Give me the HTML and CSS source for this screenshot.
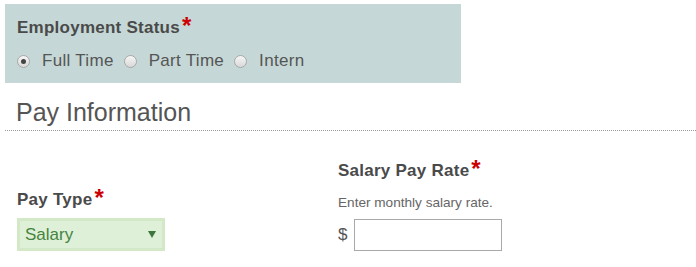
FILE: index.html
```html
<!DOCTYPE html>
<html>
<head>
<meta charset="utf-8">
<link rel="stylesheet" href="styles.css">
</head>
<body>
<div class="status-box">
  <div class="label">Employment Status<span class="req">*</span></div>
  <div class="radios">
    <label class="opt"><input type="radio" name="emp" checked><span>Full Time</span></label>
    <label class="opt"><input type="radio" name="emp"><span>Part Time</span></label>
    <label class="opt"><input type="radio" name="emp"><span>Intern</span></label>
  </div>
</div>
<h2 class="section-title">Pay Information</h2>
<div class="fields">
  <div class="field field-left">
    <div class="label">Pay Type<span class="req">*</span></div>
    <div class="select-wrap">
      <select class="select"><option>Salary</option></select>
      <span class="arrow"></span>
    </div>
  </div>
  <div class="field field-right">
    <div class="label">Salary Pay Rate<span class="req">*</span></div>
    <div class="desc">Enter monthly salary rate.</div>
    <div class="money"><span class="cur">$</span><input class="text-input" type="text"></div>
  </div>
</div>
</body>
</html>
```
FILE: styles.css
```css
html, body {
  margin: 0;
  padding: 0;
  background: #fff;
}
body {
  font-family: "Liberation Sans", Arial, sans-serif;
  font-size: 17px;
  color: #555;
}
.status-box {
  box-sizing: border-box;
  margin: 4px 0 0 5px;
  width: 456px;
  height: 79px;
  background: #c5d8d7;
  padding: 14px 12px 0 12px;
}
.label {
  font-weight: bold;
  line-height: 20px;
  letter-spacing: 0.25px;
  color: #4a4a4a;
}
.req {
  color: #cc0000;
  font-size: 24px;
  line-height: 0;
  margin-left: 2px;
  letter-spacing: 0;
  position: relative;
  top: 1px;
}
.radios {
  display: flex;
  align-items: center;
  margin-top: 13px;
  line-height: 20px;
}
.opt {
  display: flex;
  align-items: center;
  margin-right: 10px;
  letter-spacing: 0.3px;
}
.opt input {
  appearance: none;
  -webkit-appearance: none;
  box-sizing: border-box;
  width: 13px;
  height: 13px;
  margin: 0 12px 0 0;
  border-radius: 50%;
  border: 1px solid #a8a8a8;
  background: linear-gradient(#f6f6f6, #d8d8d8);
  position: relative;
}
.opt input:checked::after {
  content: "";
  position: absolute;
  left: 3px;
  top: 3px;
  width: 5px;
  height: 5px;
  border-radius: 50%;
  background: #444;
}
.section-title {
  margin: 14px 0 0 5px;
  padding: 0 0 3px 11px;
  font-size: 25px;
  font-weight: normal;
  line-height: 30px;
  color: #555;
  border-bottom: 1px dotted #999;
}
.fields {
  display: flex;
  align-items: flex-end;
  margin-top: 30px;
}
.field-left {
  margin-left: 17px;
  width: 321px;
}
.field-left .label {
  margin-bottom: 8px;
}
.select-wrap {
  position: relative;
  width: 148px;
  height: 33px;
}
.select {
  appearance: none;
  -webkit-appearance: none;
  box-sizing: border-box;
  width: 148px;
  height: 33px;
  border: 3px solid #d3e8c6;
  background: #dff0d8;
  color: #44843f;
  font-family: "Liberation Sans", Arial, sans-serif;
  font-size: 17px;
  padding: 0 0 0 5px;
  margin: 0;
  border-radius: 0;
  outline: none;
}
.arrow {
  position: absolute;
  left: 131px;
  top: 13px;
  width: 0;
  height: 0;
  border-left: 4px solid transparent;
  border-right: 4px solid transparent;
  border-top: 7px solid #3c763d;
}
.desc {
  margin-top: 14px;
  font-size: 13.6px;
  line-height: 16px;
  color: #666;
}
.money {
  display: flex;
  align-items: center;
  margin-top: 8px;
}
.cur {
  width: 16px;
  font-size: 17px;
  color: #555;
}
.text-input {
  box-sizing: border-box;
  width: 148px;
  height: 32px;
  border: 1px solid #a9a9a9;
  margin: 0;
  padding: 0 4px;
  background: #fff;
  font-family: "Liberation Sans", Arial, sans-serif;
  font-size: 17px;
  border-radius: 0;
  outline: none;
}
```
